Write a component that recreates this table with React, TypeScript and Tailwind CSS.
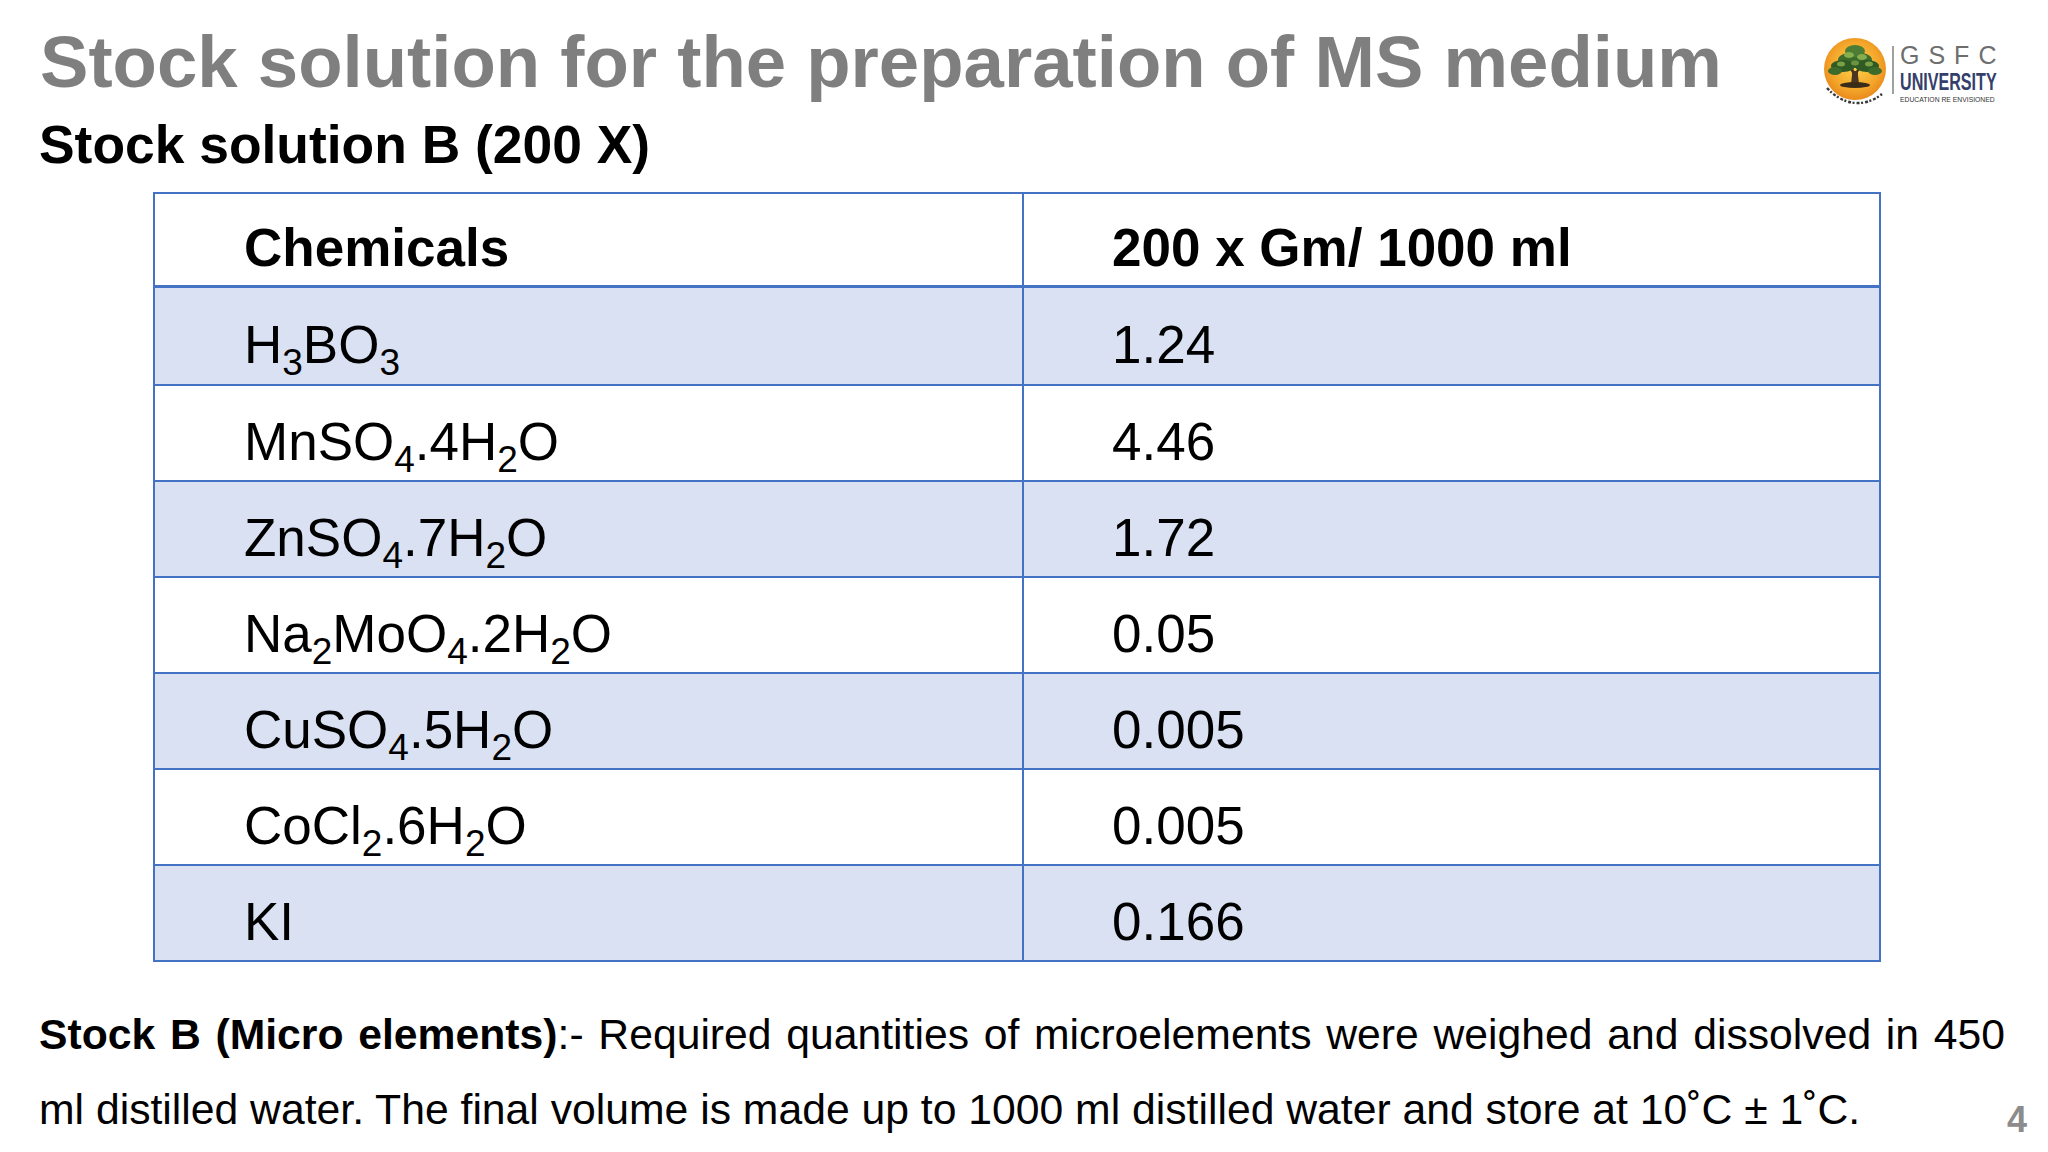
import type { ReactNode } from "react"
import clsx from "clsx"

const S = ({ children }: { children: ReactNode }) => <sub className="text-[37px] -bottom-3">{children}</sub>

const rows: { name: ReactNode; amount: string }[] = [
  { name: <>H<S>3</S>BO<S>3</S></>, amount: "1.24" },
  { name: <>MnSO<S>4</S>.4H<S>2</S>O</>, amount: "4.46" },
  { name: <>ZnSO<S>4</S>.7H<S>2</S>O</>, amount: "1.72" },
  { name: <>Na<S>2</S>MoO<S>4</S>.2H<S>2</S>O</>, amount: "0.05" },
  { name: <>CuSO<S>4</S>.5H<S>2</S>O</>, amount: "0.005" },
  { name: <>CoCl<S>2</S>.6H<S>2</S>O</>, amount: "0.005" },
  { name: <>KI</>, amount: "0.166" },
]

function Logo() {
  return (
    <div className="ml-auto mt-[10px] flex items-start">
      <svg width="66" height="72" viewBox="0 0 66 72">
        <defs>
          <radialGradient id="sun" cx="50%" cy="45%" r="55%">
            <stop offset="0%" stopColor="#fcd54c" />
            <stop offset="70%" stopColor="#f4a62a" />
            <stop offset="100%" stopColor="#ea8a1c" />
          </radialGradient>
        </defs>
        <circle cx="33" cy="33" r="31" fill="url(#sun)" />
        {/* tree */}
        <path d="M30 49 L31.5 36 L29 31 M34.5 36 L36 49 M32 38 L27 30 M34 37 L39 30" stroke="#4a3520" strokeWidth="2.2" fill="none" />
        <rect x="30" y="35" width="6" height="14" fill="#4a3520" />
        <ellipse cx="33" cy="49" rx="15" ry="3" fill="#3b2c1a" />
        <ellipse cx="33" cy="24" rx="17" ry="8" fill="#3d6b2c" />
        <ellipse cx="21" cy="30" rx="12" ry="6" fill="#2f5a24" />
        <ellipse cx="45" cy="30" rx="12" ry="6" fill="#2f5a24" />
        <ellipse cx="33" cy="15" rx="10" ry="6" fill="#4d7d35" />
        <ellipse cx="13" cy="35" rx="7" ry="4" fill="#3d6b2c" />
        <ellipse cx="53" cy="35" rx="7" ry="4" fill="#3d6b2c" />
        <ellipse cx="27" cy="19" rx="5" ry="3" fill="#86ad4e" />
        <ellipse cx="40" cy="21" rx="5" ry="3" fill="#86ad4e" />
        <ellipse cx="19" cy="28" rx="4" ry="2.5" fill="#79a045" />
        <ellipse cx="47" cy="28" rx="4" ry="2.5" fill="#79a045" />
        <ellipse cx="33" cy="27" rx="4" ry="2.5" fill="#6b9440" />
        {/* curved motto */}
        <path d="M5 52 Q20 68 38 67 Q50 66 60 58" stroke="#3a3a3a" strokeWidth="2.4" strokeDasharray="3 1.5 2 2" fill="none" />
      </svg>
      <div className="ml-[4px] mt-[10px] w-[2px] h-[48px] bg-[#a0a0a0]" />
      <div className="ml-[6px] pt-[5px] flex flex-col w-[100px]">
        <span className="text-[25px] leading-[28px] tracking-[9px] text-[#6e6e6e] font-normal">GSFC</span>
        <span className="inline-block origin-left scale-x-[0.7] text-[23px] leading-[26px] font-bold text-[#34406b] whitespace-nowrap">
          UNIVERSITY
        </span>
        <span className="inline-block origin-left scale-x-[0.85] text-[8px] leading-[10px] text-[#333] whitespace-nowrap">
          EDUCATION RE ENVISIONED
        </span>
      </div>
    </div>
  )
}

export default function App() {
  return (
    <div className="relative w-[2048px] h-[1152px] overflow-hidden bg-white text-black font-['Liberation_Sans',Arial,sans-serif]">
      {/* Title row */}
      <header className="flex items-start h-[98px] pt-[26px] pl-[40px] pr-[48px]">
        <h1 className="text-[72.6px] leading-[72px] font-bold text-[#7f7f7f] whitespace-nowrap">
          Stock solution for the preparation of MS medium
        </h1>
        <Logo />
      </header>

      <h2 className="mt-[20px] pl-[39px] text-[53.4px] leading-[53px] font-bold">Stock solution B (200 X)</h2>

      {/* Table */}
      <div className="mt-[21px] ml-[153px] w-[1728px] border-2 border-[#4472c4] text-[53px] leading-none">
        <div className="flex h-[94px] bg-white border-b-[3px] border-[#4472c4] font-bold">
          <div className="w-[869px] flex items-center pt-[16px] pl-[89px] border-r-2 border-[#4472c4]">Chemicals</div>
          <div className="flex-1 flex items-center pt-[16px] pl-[88px]">200 x Gm/ 1000 ml</div>
        </div>
        {rows.map((r, i) => (
          <div
            key={i}
            className={clsx(
              "flex h-[96px]",
              i % 2 === 0 ? "bg-[#d9e1f2]" : "bg-white",
              i > 0 && "border-t-2 border-[#4472c4]"
            )}
          >
            <div className="w-[869px] flex items-center pt-[16px] pl-[89px] border-r-2 border-[#4472c4] whitespace-nowrap">
              <span>{r.name}</span>
            </div>
            <div className="flex-1 flex items-center pt-[16px] pl-[88px]">{r.amount}</div>
          </div>
        ))}
      </div>

      {/* Notes */}
      <div className="mt-[35px] pl-[39px] pr-[43px] text-[42.7px] leading-[75px]">
        <p className="text-justify [text-align-last:justify] whitespace-nowrap">
          <b>Stock B (Micro elements)</b>:- Required quantities of microelements were weighed and dissolved in 450
        </p>
        <p>ml distilled water. The final volume is made up to 1000 ml distilled water and store at 10˚C ± 1˚C.</p>
      </div>

      <span className="absolute left-[2007px] top-[1102px] text-[36px] leading-none font-bold text-[#8c8c8c]">4</span>
    </div>
  )
}
